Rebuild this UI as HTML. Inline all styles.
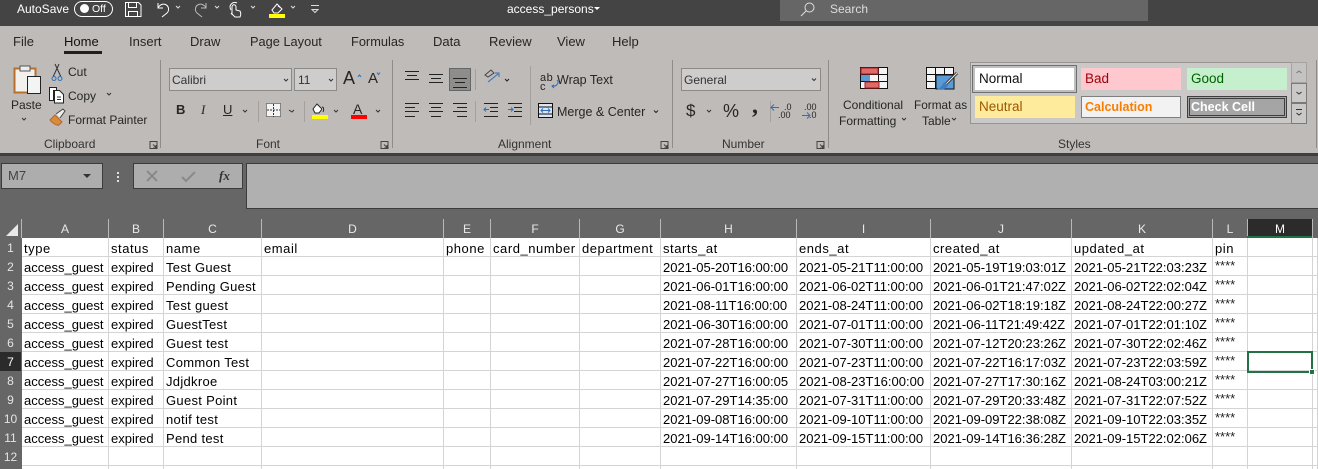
<!DOCTYPE html>
<html><head><meta charset="utf-8"><title>access_persons</title>
<style>
html,body{margin:0;padding:0;width:1318px;height:469px;overflow:hidden;background:#fff;font-family:"Liberation Sans",sans-serif;}
#wrap{position:absolute;left:0;top:0;width:1318px;height:469px;overflow:hidden;background:#fff;}
.a{position:absolute;}
.t{position:absolute;white-space:nowrap;font-size:13px;line-height:16px;color:#262626;}
.w{color:#fff;}
.l{font-size:12px;color:#333;}
.cb{position:absolute;background:#cfcdcb;border:1px solid #8c8a88;box-sizing:border-box;}
.dv{position:absolute;width:1px;background:#8f8d8b;}
.dv2{position:absolute;width:1px;background:#a3a09e;}
.st{position:absolute;box-sizing:border-box;width:100px;height:22px;font-size:13.5px;line-height:21px;padding-left:4px;white-space:nowrap;}
.ch{position:absolute;top:219px;height:19px;line-height:20px;font-size:12px;color:#e8e8e8;text-align:center;border-right:1px solid #b8b8b8;box-sizing:border-box;}
.rh{position:absolute;left:0;width:21px;height:19px;line-height:20px;font-size:12px;color:#e4e4e4;text-align:center;}
table{position:absolute;left:22px;top:238px;border-collapse:separate;border-spacing:0;table-layout:fixed;width:1296px;font-size:13px;color:#000;}
td{height:19px;box-sizing:border-box;border-right:1px solid #d4d4d4;border-bottom:1px solid #d4d4d4;padding:3px 0 0 2px;white-space:nowrap;overflow:hidden;line-height:15px;vertical-align:top;}
td:nth-child(3){letter-spacing:.3px;}
tr.h td{letter-spacing:.55px;}
td.p{line-height:14px;padding-top:2px;color:#222;}
svg{position:absolute;overflow:visible;}
</style></head><body><div id="wrap">
<!-- title bar -->
<div class="a" style="left:0;top:0;width:1318px;height:26px;background:#444444"></div>
<div class="t w" style="left:17px;top:1px;font-size:12px">AutoSave</div>
<div class="a" style="left:74px;top:1px;width:37px;height:14px;border:1px solid #fff;border-radius:8px"></div>
<div class="a" style="left:80px;top:4px;width:9px;height:9px;border-radius:50%;background:#fff"></div>
<div class="t w" style="left:92px;top:1px;font-size:10.5px">Off</div>
<svg style="left:0;top:0" width="340" height="26" fill="none" stroke="#fff" stroke-width="1">
<path d="M125.5 2.5h13l2.500 2.500v11.500h-15.500z"/><path d="M128.500 2.500v5h8v-5M128.500 16.500v-5h9v5"/>
<path d="M158 3v5h5M158 7.500c2-3 5-4 7.500-3 3.500 1.500 4 6 1.500 8.500l-5 4"/>
<path d="M176 6l2 2 2-2M215 6l2 2 2-2M251 6l2 2 2-2M291 6l2 2 2-2" stroke="#ddd"/>
<path stroke="#bbb" d="M206 3v5h-5M206 7.500c-2-3-5-4-7.500-3-3.500 1.500-4 6-1.500 8.500l5 4"/>
<path d="M232 15V7c0-3 4-3 4 0v3l4 1c1 2 1 4 0 6h-5l-4-4"/><path d="M231 10c-3-5 2-9 6-7"/>
<path d="M272 10l5-6 5 5-4 4h-4zM278 6l3 2" stroke="#fff"/>
<path d="M311 5.500h8M312 9.500h6l-3 3z" stroke="#ddd"/>
</svg>
<div class="a" style="left:269px;top:14px;width:16px;height:4px;background:#ffff00"></div>
<div class="t w" style="left:507px;top:1px;font-size:12px">access_persons</div>
<div class="a" style="left:594px;top:7px;border:3px solid transparent;border-top:3px solid #fff"></div>
<div class="a" style="left:780px;top:0;width:368px;height:21px;background:#666666"></div>
<svg style="left:800px;top:1px" width="16" height="16" fill="none" stroke="#e0e0e0"><circle cx="9.500" cy="6.500" r="4.500"/><path d="M6 10l-5 5"/></svg>
<div class="t" style="left:830px;top:1px;font-size:12px;color:#ddd">Search</div>

<!-- ribbon -->
<div class="a" style="left:0;top:26px;width:1318px;height:127px;background:#bfbbb8"></div>
<div class="t" style="left:13px;top:34px">File</div>
<div class="t" style="left:64px;top:34px;color:#111">Home</div>
<div class="a" style="left:64px;top:51px;width:38px;height:3px;background:#1f1f1f"></div>
<div class="t" style="left:129px;top:34px">Insert</div>
<div class="t" style="left:190px;top:34px">Draw</div>
<div class="t" style="left:250px;top:34px;font-size:12.8px">Page Layout</div>
<div class="t" style="left:351px;top:34px;font-size:12.8px">Formulas</div>
<div class="t" style="left:433px;top:34px">Data</div>
<div class="t" style="left:489px;top:34px">Review</div>
<div class="t" style="left:557px;top:34px">View</div>
<div class="t" style="left:612px;top:34px">Help</div>

<div class="dv" style="left:160px;top:60px;height:88px"></div>
<div class="dv" style="left:392px;top:60px;height:88px"></div>
<div class="dv" style="left:672px;top:60px;height:88px"></div>
<div class="dv" style="left:828px;top:60px;height:88px"></div>
<div class="dv" style="left:1316px;top:60px;height:88px"></div>
<div class="dv2" style="left:258px;top:101px;height:21px"></div>
<div class="dv2" style="left:304px;top:101px;height:21px"></div>
<div class="dv2" style="left:475px;top:69px;height:21px"></div>
<div class="dv2" style="left:475px;top:101px;height:21px"></div>
<div class="dv2" style="left:530px;top:66px;height:59px"></div>
<div class="dv2" style="left:770px;top:101px;height:21px"></div>

<!-- clipboard -->
<svg style="left:0;top:55px" width="160" height="85" fill="none" stroke="#222">
<rect x="14.500" y="13.500" width="21" height="24" fill="#f3f1ee" stroke="#b8702a" stroke-width="2"/>
<rect x="20" y="11" width="10" height="5" fill="#eee" stroke="#555"/>
<rect x="27.500" y="21.500" width="13" height="17" fill="#f2f5f4"/>
<path d="M55 9l6 13M59 9l-6 13" stroke="#333"/><circle cx="54" cy="23.500" r="2" stroke="#2f6fb8"/><circle cx="60" cy="23.500" r="2" stroke="#2f6fb8"/>
<path d="M49.500 32.500h7v3h-3v10h-4z" fill="#fff"/><path d="M54.500 35.500h5l4 4v8.500h-9z" fill="#fff"/><path d="M57 42h4M57 44.500h4" stroke="#333"/>
<path d="M50 65l5-5 7 7-3 3c-2 1-7-2-9-5z" fill="#d98b3c" stroke="#b5662a"/><path d="M56 59l7-5 2 2-5 7" fill="#eee" stroke="#444"/>
<path d="M22 63l2 2 2-2" stroke="#333"/><path d="M107 38l2 2 2-2" stroke="#333"/>
</svg>
<div class="t" style="left:11px;top:97px;font-size:12px">Paste</div>
<div class="t" style="left:68px;top:64px;font-size:12px">Cut</div>
<div class="t" style="left:68px;top:88px;font-size:12px">Copy</div>
<div class="t" style="left:68px;top:112px;font-size:12px">Format Painter</div>
<div class="t l" style="left:44px;top:136px">Clipboard</div>

<!-- font -->
<div class="cb" style="left:169px;top:68px;width:123px;height:23px"></div>
<div class="t" style="left:172px;top:72px;font-size:12px;color:#333">Calibri</div>
<div class="cb" style="left:294px;top:68px;width:43px;height:23px"></div>
<div class="t" style="left:298px;top:72px;font-size:12px;color:#333">11</div>
<div class="t" style="left:343px;top:69px;font-size:18px;line-height:18px">A</div>
<div class="t" style="left:368px;top:71px;font-size:15px;line-height:16px">A</div>
<div class="t" style="left:176px;top:102px;font-weight:bold;font-size:13px">B</div>
<div class="t" style="left:201px;top:102px;font-style:italic;font-size:13px;font-family:'Liberation Serif',serif">I</div>
<div class="t" style="left:223px;top:102px;font-size:13px;text-decoration:underline">U</div>
<div class="t" style="left:353px;top:101px;font-size:14px">A</div>
<div class="a" style="left:312px;top:115px;width:16px;height:4px;background:#ffff00"></div>
<div class="a" style="left:351px;top:115px;width:16px;height:4px;background:#ff0000"></div>
<svg style="left:160px;top:60px" width="235" height="70" fill="none" stroke="#333">
<path d="M124 19l2 2 2-2M169 19l2 2 2-2M83 50l2 2 2-2M129 50l3 2 2-2M174 50l2 2 2-2M216 50l2 2 2-2" stroke="#333"/>
<path d="M198 17l1.500-2 1.500 2" stroke="#2f6fb8"/><path d="M217 12.500l1.500 2 1.500-2" stroke="#2f6fb8"/>
<rect x="106.500" y="43.500" width="14" height="13" fill="#f4f4f4" stroke-dasharray="1 1"/><path d="M113.500 44v13M107 50h14" stroke-dasharray="2 1"/>
<path d="M153 49l4-5 5 5-3 4h-4zM162 47c2 0 2 3 1 5" stroke="#222" fill="#fff"/>
</svg>
<div class="t l" style="left:256px;top:136px">Font</div>

<!-- alignment -->
<div class="a" style="left:449px;top:68px;width:22px;height:23px;background:#8f8d8b;border:1px solid #666;box-sizing:border-box"></div>
<svg style="left:400px;top:60px" width="270" height="70" fill="none" stroke="#222">
<path d="M5 11.500h14M7 15.500h10M5 19.500h14M29 14.500h14M31 18.500h10M29 22.500h14M53 18.500h14M55 22.500h10M53 27.500h14"/>
<path d="M5 43.500h14M5 47.500h10M5 51.500h14M5 56.500h10M29 43.500h14M31 47.500h10M29 51.500h14M31 56.500h10M53 43.500h14M57 47.500h10M53 51.500h14M57 56.500h10"/>
<path d="M84 43.500h14M90 47.500h8M90 51.500h8M84 56.500h14M108 43.500h14M114 47.500h8M114 51.500h8M108 56.500h14" stroke="#222"/>
<path d="M89 49.500h-5m2-2l-2 2 2 2M108 49.500h5m-2-2l2 2-2 2" stroke="#2f6fb8"/>
<path d="M88 22l10-8m-3-1h4v4" stroke="#2f6fb8"/><path d="M85 15l6-5 3 3-6 4z" stroke="#444"/>
<path d="M105 19l2 2 2-2M254 50.500l2 2 2-2"/>
<path d="M154 26l-2 0c4 1 8-3 5-6m-3 5l-2 1 2 2" stroke="#2f6fb8"/>
<rect x="138.500" y="43.500" width="14" height="14" fill="#dbe6f2" stroke="#111"/><path d="M139 47h13M139 54h13" stroke="#111"/><path d="M141 50.500h9m-7-2l-2 2 2 2m5-4l2 2-2 2" stroke="#2f6fb8"/>
</svg>
<div class="t" style="left:540px;top:72px;font-size:11px;line-height:12px;letter-spacing:.5px">ab</div>
<div class="t" style="left:540px;top:81px;font-size:11px;line-height:12px">c</div>
<div class="t" style="left:557px;top:72px;font-size:12.500px">Wrap Text</div>
<div class="t" style="left:557px;top:104px;font-size:12.500px">Merge &amp; Center</div>
<div class="t l" style="left:498px;top:136px">Alignment</div>

<!-- number -->
<div class="cb" style="left:681px;top:68px;width:140px;height:23px"></div>
<div class="t" style="left:684px;top:72px;font-size:12px;color:#333">General</div>
<div class="t" style="left:686px;top:101px;font-size:17px;line-height:20px">$</div>
<div class="t" style="left:723px;top:101px;font-size:18px;line-height:20px">%</div>
<div class="t" style="left:752px;top:94px;font-size:24px;line-height:24px;font-weight:bold;font-family:'Liberation Serif',serif">,</div>
<div class="t" style="left:784px;top:103px;font-size:9px;line-height:9px">.0</div>
<div class="t" style="left:778px;top:111px;font-size:9px;line-height:9px">.00</div>
<div class="t" style="left:804px;top:103px;font-size:9px;line-height:9px">.00</div>
<div class="t" style="left:809px;top:111px;font-size:9px;line-height:9px">.0</div>
<svg style="left:672px;top:60px" width="156" height="70" fill="none" stroke="#333">
<path d="M35 50l2 2 2-2" stroke="#333"/>
<path d="M140 18.500l2 2 2-2"/>
<path d="M107 47.500h-8m3-3l-3 3 3 3M130 55.500h8m-3-3l3 3-3 3" stroke="#2f6fb8"/>
</svg>
<div class="t l" style="left:722px;top:136px">Number</div>

<!-- styles commands -->
<svg style="left:860px;top:65px" width="100" height="30" fill="none" stroke="#111">
<rect x=".5" y="2.500" width="27" height="21" fill="#f4f4f4"/><path d="M9.500 3v20M18.500 3v20M1 9.500h27M1 16.500h27"/>
<rect x="1" y="3" width="17" height="6" fill="#df6a6a" stroke="#a52020"/><rect x="1" y="10" width="9" height="6" fill="#5b9bd5" stroke="none"/><rect x="5" y="17" width="14" height="6" fill="#df6a6a" stroke="#a52020"/>
<rect x="66.500" y="2.500" width="27" height="21" fill="#f4f4f4"/><path d="M75.500 3v20M84.500 3v20M67 9.500h27M67 16.500h27"/>
<rect x="76" y="10" width="18" height="14" fill="#5b9bd5"/>
<path d="M97 8l-11 11" stroke="#333" stroke-width="3"/><path d="M97 8l-11 11" stroke="#eee"/><path d="M85 17c-3 1-2 5-8 7 5 2 10 0 11-4z" fill="#3f7fc0" stroke="none"/>
</svg>
<div class="t" style="left:843px;top:97px;font-size:12px">Conditional</div>
<div class="t" style="left:839px;top:113px;font-size:12px">Formatting</div>
<div class="t" style="left:914px;top:97px;font-size:11.800px">Format as</div>
<div class="t" style="left:922px;top:113px;font-size:12px">Table</div>
<svg style="left:895px;top:115px" width="70" height="10" fill="none" stroke="#333"><path d="M7 3l2 2 2-2M57 3l2 2 2-2"/></svg>

<!-- style gallery -->
<div class="a" style="left:970px;top:62px;width:322px;height:62px;background:#cbc9c7;border:1px solid #969492;box-sizing:border-box"></div>
<div class="a" style="left:972px;top:65px;width:105px;height:28px;background:#fff;border:3px solid #bfbfbf;outline:1px solid #6f6f6f;outline-offset:-1px;box-sizing:border-box"></div>
<div class="st" style="left:975px;top:68px;color:#111">Normal</div>
<div class="st" style="left:1081px;top:68px;background:#ffc7ce;color:#9c0006">Bad</div>
<div class="st" style="left:1187px;top:68px;background:#c6efce;color:#006100">Good</div>
<div class="st" style="left:975px;top:96px;background:#ffeb9c;color:#9c5700">Neutral</div>
<div class="st" style="left:1081px;top:96px;background:#f2f2f2;border:1px solid #7f7f7f;color:#fa7d00;font-weight:bold;padding-left:3px;font-size:12.500px">Calculation</div>
<div class="st" style="left:1187px;top:96px;background:#a5a5a5;border:3px double #3f3f3f;color:#fff;font-weight:bold;padding-left:1px;line-height:16px;font-size:12.500px">Check Cell</div>
<div class="a" style="left:1291px;top:62px;width:16px;height:21px;background:#c5c3c1;border:1px solid #a5a3a1;box-sizing:border-box"></div>
<div class="a" style="left:1291px;top:83px;width:16px;height:20px;background:#cbc9c7;border:1px solid #7c7a78;box-sizing:border-box"></div>
<div class="a" style="left:1291px;top:103px;width:16px;height:21px;background:#cbc9c7;border:1px solid #7c7a78;box-sizing:border-box"></div>
<svg style="left:1291px;top:62px" width="16" height="62" fill="none" stroke="#333"><path stroke="#777" d="M5.500 11l2.500-2 2.500 2"/><path d="M5.500 30l2.500 2 2.500-2M5 47.500h6M5.500 51l2.500 2 2.500-2"/></svg>
<div class="t l" style="left:1058px;top:136px">Styles</div>

<svg style="left:0;top:140px" width="1318" height="12" fill="none" stroke="#444">
<path d="M150 1.500h7v7h-7zM153 4.500l3 3M156 5v3h-3"/>
<path d="M381 1.500h7v7h-7zM384 4.500l3 3M387 5v3h-3"/>
<path d="M661 1.500h7v7h-7zM664 4.500l3 3M667 5v3h-3"/>
<path d="M817 1.500h7v7h-7zM820 4.500l3 3M823 5v3h-3"/>
</svg>

<!-- formula bar -->
<div class="a" style="left:0;top:153px;width:1318px;height:66px;background:#666666"></div>
<div class="a" style="left:0;top:153px;width:1318px;height:3px;background:#3f3f3f"></div>
<div class="a" style="left:1px;top:163px;width:102px;height:26px;background:#adadad;border:1px solid #3c3c3c;box-sizing:border-box"></div>
<div class="t" style="left:8px;top:168px;color:#444">M7</div>
<div class="a" style="left:83px;top:174px;border:4px solid transparent;border-top:4px solid #333"></div>
<div class="a" style="left:117px;top:172px;width:2px;height:2px;background:#e0e0e0;box-shadow:0 4px #e0e0e0,0 8px #e0e0e0"></div>
<div class="a" style="left:133px;top:163px;width:110px;height:26px;background:#adadad;border:1px solid #3c3c3c;box-sizing:border-box"></div>
<svg style="left:133px;top:163px" width="110" height="26" fill="none" stroke="#8a8a8a" stroke-width="2"><path d="M14 8l10 10M24 8l-10 10M49 14l4 4 9-9"/></svg>
<div class="t" style="left:219px;top:168px;font-family:'Liberation Serif',serif;font-style:italic;font-weight:bold;font-size:13px;color:#333">fx</div>
<div class="a" style="left:246px;top:163px;width:1073px;height:46px;background:#b0b0b0;border:1px solid #3c3c3c;box-sizing:border-box"></div>

<!-- grid headers -->
<div class="a" style="left:0;top:209px;width:1318px;height:29px;background:#666666"></div>
<div class="a" style="left:0;top:238px;width:22px;height:231px;background:#666666"></div>
<div class="a" style="left:21px;top:219px;width:1px;height:19px;background:#b8b8b8"></div>
<svg style="left:0;top:219px" width="22" height="19"><path d="M18 5v12H6z" fill="#e8e8e8"/></svg>
<div class="ch" style="left:22px;width:87px">A</div>
<div class="ch" style="left:109px;width:55px">B</div>
<div class="ch" style="left:164px;width:98px">C</div>
<div class="ch" style="left:262px;width:182px">D</div>
<div class="ch" style="left:444px;width:47px">E</div>
<div class="ch" style="left:491px;width:89px">F</div>
<div class="ch" style="left:580px;width:81px">G</div>
<div class="ch" style="left:661px;width:136px">H</div>
<div class="ch" style="left:797px;width:134px">I</div>
<div class="ch" style="left:931px;width:141px">J</div>
<div class="ch" style="left:1072px;width:141px">K</div>
<div class="ch" style="left:1213px;width:35px">L</div>
<div class="ch" style="left:1248px;width:65px;background:#2b2b2b;color:#fff">M</div>
<div class="a" style="left:1247px;top:236px;width:65px;height:2px;background:#217346"></div>

<div class="rh" style="top:238px">1</div>
<div class="rh" style="top:257px">2</div>
<div class="rh" style="top:276px">3</div>
<div class="rh" style="top:295px">4</div>
<div class="rh" style="top:314px">5</div>
<div class="rh" style="top:333px">6</div>
<div class="rh" style="top:352px;background:#2b2b2b;color:#fff">7</div>
<div class="rh" style="top:371px">8</div>
<div class="rh" style="top:390px">9</div>
<div class="rh" style="top:409px">10</div>
<div class="rh" style="top:428px">11</div>
<div class="rh" style="top:447px">12</div>

<table><colgroup><col style="width:87px"><col style="width:55px"><col style="width:98px"><col style="width:182px"><col style="width:47px"><col style="width:89px"><col style="width:81px"><col style="width:136px"><col style="width:134px"><col style="width:141px"><col style="width:141px"><col style="width:35px"><col style="width:65px"><col style="width:5px"></colgroup>
<tr class="h"><td>type</td><td>status</td><td>name</td><td>email</td><td>phone</td><td>card_number</td><td>department</td><td>starts_at</td><td>ends_at</td><td>created_at</td><td>updated_at</td><td>pin</td><td></td><td></td></tr>
<tr><td>access_guest</td><td>expired</td><td>Test Guest</td><td></td><td></td><td></td><td></td><td>2021-05-20T16:00:00</td><td>2021-05-21T11:00:00</td><td>2021-05-19T19:03:01Z</td><td>2021-05-21T22:03:23Z</td><td class="p">****</td><td></td><td></td></tr>
<tr><td>access_guest</td><td>expired</td><td>Pending Guest</td><td></td><td></td><td></td><td></td><td>2021-06-01T16:00:00</td><td>2021-06-02T11:00:00</td><td>2021-06-01T21:47:02Z</td><td>2021-06-02T22:02:04Z</td><td class="p">****</td><td></td><td></td></tr>
<tr><td>access_guest</td><td>expired</td><td>Test guest</td><td></td><td></td><td></td><td></td><td>2021-08-11T16:00:00</td><td>2021-08-24T11:00:00</td><td>2021-06-02T18:19:18Z</td><td>2021-08-24T22:00:27Z</td><td class="p">****</td><td></td><td></td></tr>
<tr><td>access_guest</td><td>expired</td><td>GuestTest</td><td></td><td></td><td></td><td></td><td>2021-06-30T16:00:00</td><td>2021-07-01T11:00:00</td><td>2021-06-11T21:49:42Z</td><td>2021-07-01T22:01:10Z</td><td class="p">****</td><td></td><td></td></tr>
<tr><td>access_guest</td><td>expired</td><td>Guest test</td><td></td><td></td><td></td><td></td><td>2021-07-28T16:00:00</td><td>2021-07-30T11:00:00</td><td>2021-07-12T20:23:26Z</td><td>2021-07-30T22:02:46Z</td><td class="p">****</td><td></td><td></td></tr>
<tr><td>access_guest</td><td>expired</td><td>Common Test</td><td></td><td></td><td></td><td></td><td>2021-07-22T16:00:00</td><td>2021-07-23T11:00:00</td><td>2021-07-22T16:17:03Z</td><td>2021-07-23T22:03:59Z</td><td class="p">****</td><td></td><td></td></tr>
<tr><td>access_guest</td><td>expired</td><td>Jdjdkroe</td><td></td><td></td><td></td><td></td><td>2021-07-27T16:00:05</td><td>2021-08-23T16:00:00</td><td>2021-07-27T17:30:16Z</td><td>2021-08-24T03:00:21Z</td><td class="p">****</td><td></td><td></td></tr>
<tr><td>access_guest</td><td>expired</td><td>Guest Point</td><td></td><td></td><td></td><td></td><td>2021-07-29T14:35:00</td><td>2021-07-31T11:00:00</td><td>2021-07-29T20:33:48Z</td><td>2021-07-31T22:07:52Z</td><td class="p">****</td><td></td><td></td></tr>
<tr><td>access_guest</td><td>expired</td><td>notif test</td><td></td><td></td><td></td><td></td><td>2021-09-08T16:00:00</td><td>2021-09-10T11:00:00</td><td>2021-09-09T22:38:08Z</td><td>2021-09-10T22:03:35Z</td><td class="p">****</td><td></td><td></td></tr>
<tr><td>access_guest</td><td>expired</td><td>Pend test</td><td></td><td></td><td></td><td></td><td>2021-09-14T16:00:00</td><td>2021-09-15T11:00:00</td><td>2021-09-14T16:36:28Z</td><td>2021-09-15T22:02:06Z</td><td class="p">****</td><td></td><td></td></tr>
<tr><td></td><td></td><td></td><td></td><td></td><td></td><td></td><td></td><td></td><td></td><td></td><td></td><td></td><td></td></tr>
<tr><td></td><td></td><td></td><td></td><td></td><td></td><td></td><td></td><td></td><td></td><td></td><td></td><td></td><td></td></tr>
</table>
<!-- selection -->
<div class="a" style="left:1247px;top:351px;width:66px;height:22px;border:2px solid #217346;box-sizing:border-box"></div>
<div class="a" style="left:1309px;top:369px;width:6px;height:6px;background:#217346;border:1px solid #fff;box-sizing:border-box"></div>
</div></body></html>
